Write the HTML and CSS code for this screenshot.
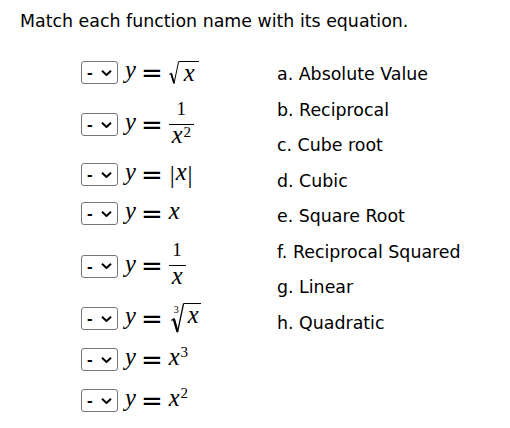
FILE: index.html
```html
<!DOCTYPE html>
<html lang="en">
<head>
<meta charset="utf-8">
<title>Match functions</title>
<link rel="stylesheet" href="styles.css">
</head>
<body>
<main class="page">
  <p class="prompt">Match each function name with its equation.</p>
  <div class="board">
    <div class="eqs">
      <div class="row r-std">
        <span class="pick-wrap"><select class="pick"><option>-</option></select><svg class="chev" viewBox="0 0 11 6"><path d="M1 0.8 L5.5 5 L10 0.8" fill="none" stroke="#000" stroke-width="2"/></svg></span>
        <span class="eq"><span class="mi">y</span><span class="rel">=</span>
          <span class="sqrt"><svg class="rad" viewBox="0 0 10 24" preserveAspectRatio="none"><path d="M0.3 13.5 L2.2 12.2 L5 22.5 L9.6 0.6 L10 0.6" fill="none" stroke="#000" stroke-width="1"/><path d="M2.2 12.4 L5 22" stroke="#000" stroke-width="1.8" fill="none"/></svg><span class="radicand"><span class="mi">x</span></span></span>
        </span>
      </div>
      <div class="row r-frac2">
        <span class="pick-wrap"><select class="pick"><option>-</option></select><svg class="chev" viewBox="0 0 11 6"><path d="M1 0.8 L5.5 5 L10 0.8" fill="none" stroke="#000" stroke-width="2"/></svg></span>
        <span class="eq"><span class="mi">y</span><span class="rel">=</span>
          <span class="frac"><span class="num">1</span><span class="den"><span class="mi">x</span><span class="sup">2</span></span></span>
        </span>
      </div>
      <div class="row r-abs">
        <span class="pick-wrap"><select class="pick"><option>-</option></select><svg class="chev" viewBox="0 0 11 6"><path d="M1 0.8 L5.5 5 L10 0.8" fill="none" stroke="#000" stroke-width="2"/></svg></span>
        <span class="eq"><span class="mi">y</span><span class="rel">=</span><span class="bar">|</span><span class="mi">x</span><span class="bar">|</span></span>
      </div>
      <div class="row r-std">
        <span class="pick-wrap"><select class="pick"><option>-</option></select><svg class="chev" viewBox="0 0 11 6"><path d="M1 0.8 L5.5 5 L10 0.8" fill="none" stroke="#000" stroke-width="2"/></svg></span>
        <span class="eq"><span class="mi">y</span><span class="rel">=</span><span class="mi">x</span></span>
      </div>
      <div class="row r-frac">
        <span class="pick-wrap"><select class="pick"><option>-</option></select><svg class="chev" viewBox="0 0 11 6"><path d="M1 0.8 L5.5 5 L10 0.8" fill="none" stroke="#000" stroke-width="2"/></svg></span>
        <span class="eq"><span class="mi">y</span><span class="rel">=</span>
          <span class="frac"><span class="num">1</span><span class="den"><span class="mi">x</span></span></span>
        </span>
      </div>
      <div class="row r-std">
        <span class="pick-wrap"><select class="pick"><option>-</option></select><svg class="chev" viewBox="0 0 11 6"><path d="M1 0.8 L5.5 5 L10 0.8" fill="none" stroke="#000" stroke-width="2"/></svg></span>
        <span class="eq"><span class="mi">y</span><span class="rel">=</span>
          <span class="sqrt cube"><span class="idx">3</span><svg class="rad" viewBox="0 0 10 24" preserveAspectRatio="none"><path d="M0.3 13.5 L2.2 12.2 L5 22.5 L9.6 0.6 L10 0.6" fill="none" stroke="#000" stroke-width="1"/><path d="M2.2 12.4 L5 22" stroke="#000" stroke-width="1.8" fill="none"/></svg><span class="radicand"><span class="mi">x</span></span></span>
        </span>
      </div>
      <div class="row r-std">
        <span class="pick-wrap"><select class="pick"><option>-</option></select><svg class="chev" viewBox="0 0 11 6"><path d="M1 0.8 L5.5 5 L10 0.8" fill="none" stroke="#000" stroke-width="2"/></svg></span>
        <span class="eq"><span class="mi">y</span><span class="rel">=</span><span class="mi">x</span><span class="sup">3</span></span>
      </div>
      <div class="row r-std">
        <span class="pick-wrap"><select class="pick"><option>-</option></select><svg class="chev" viewBox="0 0 11 6"><path d="M1 0.8 L5.5 5 L10 0.8" fill="none" stroke="#000" stroke-width="2"/></svg></span>
        <span class="eq"><span class="mi">y</span><span class="rel">=</span><span class="mi">x</span><span class="sup">2</span></span>
      </div>
    </div>
    <ol class="names">
      <li>a. Absolute Value</li>
      <li>b. Reciprocal</li>
      <li>c. Cube root</li>
      <li>d. Cubic</li>
      <li>e. Square Root</li>
      <li>f. Reciprocal Squared</li>
      <li>g. Linear</li>
      <li>h. Quadratic</li>
    </ol>
  </div>
</main>
</body>
</html>
```
FILE: styles.css
```css
html, body {
  margin: 0;
  padding: 0;
  background: #fff;
}
body {
  font-family: "DejaVu Sans", "Open Sans", sans-serif;
  color: #000;
}
.page {
  padding: 11px 0 0 20px;
}
.prompt {
  margin: 0;
  font-size: 17.4px;
  line-height: 20px;
}
.board {
  display: grid;
  grid-template-columns: 196px auto;
  margin-left: 61px;
  margin-top: 21px;
}
.eqs {
  display: flex;
  flex-direction: column;
}
.row {
  display: flex;
  align-items: center;
  height: 41px;
}
.r-frac2 { height: 63px; }
.r-frac { height: 64px; }
.r-abs { height: 37px; }
.pick-wrap {
  position: relative;
  display: block;
  width: 37px;
  height: 23px;
  margin-right: 7px;
  flex: none;
}
.pick {
  -webkit-appearance: none;
  appearance: none;
  display: block;
  box-sizing: border-box;
  width: 37px;
  height: 23px;
  margin: 0;
  font-family: "Liberation Sans", Arial, sans-serif;
  font-size: 17px;
  font-weight: bold;
  line-height: 21px;
  border: 1px solid #767676;
  border-radius: 3px;
  background: #fff;
  color: #000;
  padding: 0 0 0 5px;
}
.chev {
  position: absolute;
  right: 6px;
  top: 8.5px;
  width: 11px;
  height: 6px;
  pointer-events: none;
}
.eq {
  display: inline-flex;
  align-items: center;
  font-family: "Liberation Serif", "DejaVu Serif", serif;
  font-size: 24.5px;
  line-height: 1;
}
.mi {
  font-family: "Liberation Serif", serif;
  font-style: italic;
  font-size: 24.5px;
}
.eq > .mi {
  margin-top: -4.5px;
}
.rel {
  font-family: "DejaVu Sans", sans-serif;
  font-size: 26px;
  margin: 0 6px 0 5px;
}
.sup {
  font-family: "Liberation Serif", serif;
  font-size: 15px;
  align-self: flex-start;
  margin-top: -2px;
  margin-left: 1px;
}
.bar {
  font-family: "Liberation Serif", serif;
  font-size: 25px;
  margin: 0 1px;
}
.sqrt {
  display: inline-flex;
  align-items: stretch;
}
.rad {
  width: 10px;
  height: auto;
  display: block;
  flex: none;
}
.radicand {
  border-top: 1px solid #000;
  padding: 1px 4px 0 5px;
  line-height: 20px;
}
.cube .idx {
  font-size: 10px;
  line-height: 1;
  margin: 2.5px 0 0 5px;
}
.cube .rad {
  width: 13px;
  margin-left: -8px;
}
.cube .radicand {
  padding-left: 4px;
  padding-right: 2px;
}
.frac {
  display: inline-flex;
  flex-direction: column;
  align-items: stretch;
}
.num {
  display: flex;
  align-items: flex-end;
  justify-content: center;
  box-sizing: border-box;
  height: 26px;
  padding: 0 3px 6px;
  font-size: 19px;
  border-bottom: 1px solid #000;
}
.den {
  display: flex;
  align-items: flex-start;
  justify-content: center;
  box-sizing: border-box;
  height: 26px;
  padding: 0 3px;
}
.den .mi {
  margin-top: -2px;
}
.den .sup {
  margin-top: 0;
}
.names {
  list-style: none;
  margin: 0;
  padding: 5px 0 0 0;
  font-size: 17.4px;
  line-height: 35.5px;
}
```
